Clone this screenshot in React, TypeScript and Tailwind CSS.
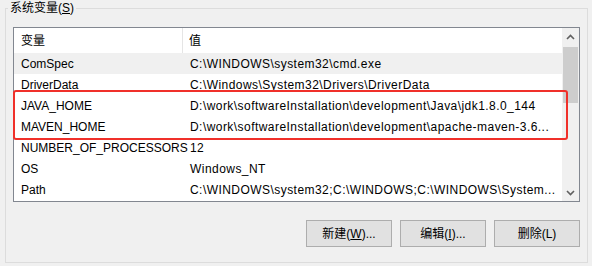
const rows: [string, string][] = [
  ["ComSpec", "C:\\WINDOWS\\system32\\cmd.exe"],
  ["DriverData", "C:\\Windows\\System32\\Drivers\\DriverData"],
  ["JAVA_HOME", "D:\\work\\softwareInstallation\\development\\Java\\jdk1.8.0_144"],
  ["MAVEN_HOME", "D:\\work\\softwareInstallation\\development\\apache-maven-3.6..."],
  ["NUMBER_OF_PROCESSORS", "12"],
  ["OS", "Windows_NT"],
  ["Path", "C:\\WINDOWS\\system32;C:\\WINDOWS;C:\\WINDOWS\\System..."],
];

const font = { fontFamily: '"Liberation Sans", "Noto Sans CJK SC", sans-serif' };

function Button({ label, hot, rest }: { label: string; hot: string; rest: string }) {
  return (
    <button className="flex h-[27px] w-[86px] items-center justify-center border border-[#adadad] bg-[#e1e1e1] text-[12px] text-black">
      {label}(<span className={hot === "L" ? "" : "underline"}>{hot}</span>){rest}
    </button>
  );
}

export default function App() {
  return (
    <div className="h-[266px] w-[592px] overflow-hidden bg-[#f0f0f0] text-[12px] text-black" style={font}>
      <fieldset className="ml-[5px] mr-[4px] h-[263px] border border-[#dcdcdc] p-0">
        <legend className="ml-[2px] px-[2px] text-[12px] leading-[16px]">
          系统变量(<span className="underline">S</span>)
        </legend>
        <div className="relative ml-[7px] mr-[7px] mt-[11px] flex h-[175px] border border-[#828790] bg-white">
          <div className="min-w-0 flex-1 overflow-hidden">
            <div className="flex h-[25px] items-center">
              <div className="flex h-full w-[169px] items-center border-r border-[#e5e5e5] pl-[7px]">变量</div>
              <div className="pl-[6px]">值</div>
            </div>
            {rows.map(([k, v], i) => (
              <div key={k} className={`flex h-[21px] items-center ${i === 0 ? "bg-[#f0f0f0]" : ""}`}>
                <div className="w-[169px] shrink-0 whitespace-nowrap pl-[7px]">{k}</div>
                <div className="whitespace-nowrap pl-[7px] tracking-[0.45px]">{v}</div>
              </div>
            ))}
          </div>
          <div className="flex w-[17px] shrink-0 flex-col bg-[#f0f0f0]">
            <div className="flex h-[17px] items-center justify-center">
              <svg width="9" height="6" viewBox="0 0 9 6">
                <path d="M1 5 L4.5 1.5 L8 5" fill="none" stroke="#606060" strokeWidth="1.6" />
              </svg>
            </div>
            <div className="mx-[1px] mt-[2px] h-[56px] bg-[#cdcdcd]" />
            <div className="flex-1" />
            <div className="flex h-[17px] items-center justify-center">
              <svg width="9" height="6" viewBox="0 0 9 6">
                <path d="M1 1 L4.5 4.5 L8 1" fill="none" stroke="#606060" strokeWidth="1.6" />
              </svg>
            </div>
          </div>
          <div className="pointer-events-none absolute left-[-1px] top-[62px] h-[50px] w-[555px] rounded-[3px] border-[2.5px] border-[#f0302a]" />
        </div>
        <div className="mr-[7px] mt-[18px] flex justify-end gap-[8px]">
          <Button label="新建" hot="W" rest="..." />
          <Button label="编辑" hot="I" rest="..." />
          <Button label="删除" hot="L" rest="" />
        </div>
      </fieldset>
    </div>
  );
}
